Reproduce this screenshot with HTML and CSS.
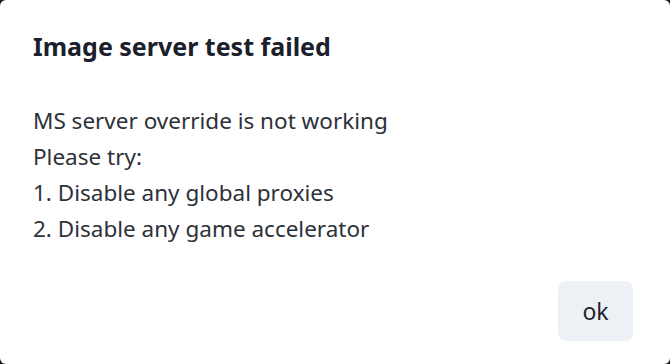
FILE: index.html
```html
<!DOCTYPE html>
<html>
<head>
<meta charset="utf-8">
<link rel="stylesheet" href="styles.css">
</head>
<body>
<div class="dialog">
  <h1 class="title">Image server test failed</h1>
  <div class="message">
    <div class="line">MS server override is not working</div>
    <div class="line">Please try:</div>
    <div class="line">1. Disable any global proxies</div>
    <div class="line">2. Disable any game accelerator</div>
  </div>
  <div class="actions">
    <button class="btn">ok</button>
  </div>
</div>
</body>
</html>
```

FILE: styles.css
```css
html, body {
  margin: 0;
  padding: 0;
  width: 670px;
  height: 364px;
  background: #1a1a1a;
  overflow: hidden;
}
.dialog {
  box-sizing: border-box;
  width: 670px;
  height: 364px;
  background: #ffffff;
  border-radius: 6px;
  padding: 29px 37px 23px 33px;
  display: flex;
  flex-direction: column;
  font-family: "Noto Sans", "Open Sans", sans-serif;
}
.title {
  margin: 0;
  font-size: 25px;
  font-weight: 700;
  line-height: 34px;
  color: #1a202c;
}
.message {
  margin-top: 40px;
  font-size: 22.5px;
  line-height: 36px;
  color: #2d3138;
}
.actions {
  margin-top: auto;
  display: flex;
  justify-content: flex-end;
}
.btn {
  width: 75px;
  height: 60px;
  border: none;
  border-radius: 8px;
  background: #edf1f5;
  font-family: "Noto Sans", "Open Sans", sans-serif;
  font-size: 23px;
  color: #1f2430;
  padding: 0;
}
```
